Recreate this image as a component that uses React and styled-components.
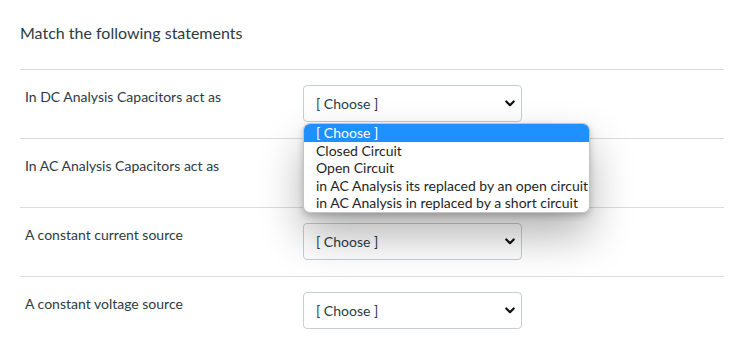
import React from 'react';
import styled, { createGlobalStyle } from 'styled-components';

const GlobalStyle = createGlobalStyle`
    body {
        margin: 0;
        background: #ffffff;
        font-family: Lato, 'Open Sans', sans-serif;
        color: #2d3b45;
    }
`;

const Page = styled.div`
    width: 704px;
    padding: 23px 0 0 20px;
`;

const Title = styled.div`
    font-size: 16px;
    line-height: 20px;
    margin-bottom: 26px;
`;

const Row = styled.div`
    display: flex;
    align-items: flex-start;
    border-top: 1px solid #dcdcdc;
    padding: 15px 0 16px;
`;

const Label = styled.div`
    width: 278px;
    padding: 3px 0 0 5px;
    font-size: 14px;
    line-height: 18px;
`;

const SelectWrap = styled.div`
    position: relative;
`;

// the select under the open popup is hidden behind it
const Select = styled.div`
    box-sizing: border-box;
    width: 219px;
    height: 37px;
    display: flex;
    align-items: center;
    justify-content: space-between;
    padding: 0 6px 0 12px;
    border: 1px solid #c7cdd1;
    border-radius: 4px;
    background: #ffffff;
    font-size: 14px;
    color: #2d3b45;
    visibility: ${props => (props.$covered ? 'hidden' : 'visible')};
`;

const Popup = styled.ul`
    position: absolute;
    top: 38px;
    left: 0;
    z-index: 2;
    box-sizing: border-box;
    width: 287px;
    margin: 0;
    padding: 0;
    list-style: none;
    background: #ffffff;
    border: 1px solid #c4c4c4;
    border-radius: 7px;
    overflow: hidden;
    box-shadow: 0 3px 6px rgba(0, 0, 0, 0.2), 0 22px 44px rgba(0, 0, 0, 0.3);
`;

const Option = styled.li`
    height: 17.6px;
    line-height: 17.6px;
    padding-left: 12px;
    font-size: 14px;
    white-space: nowrap;
    color: ${props => (props.selected ? '#ffffff' : '#1f1f1f')};
    background: ${props => (props.selected ? '#1e90ff' : 'transparent')};
`;

const Chevron = () => (
    <svg width="10" height="7" viewBox="0 0 10 7">
        <path
            d="M1.3 1.5 L5 5.2 L8.7 1.5"
            fill="none"
            stroke="#111"
            strokeWidth="2.2"
            strokeLinecap="round"
            strokeLinejoin="round"
        />
    </svg>
);

const options = [
    '[ Choose ]',
    'Closed Circuit',
    'Open Circuit',
    'in AC Analysis its replaced by an open circuit',
    'in AC Analysis in replaced by a short circuit',
];

const statements = [
    'In DC Analysis Capacitors act as',
    'In AC Analysis Capacitors act as',
    'A constant current source',
    'A constant voltage source',
];

export default function App() {
    return (
        <Page>
            <GlobalStyle />
            <Title>Match the following statements</Title>
            {statements.map((s, i) => (
                <Row key={s}>
                    <Label>{s}</Label>
                    <SelectWrap>
                        <Select $covered={i === 1}>
                            <span>[ Choose ]</span>
                            <Chevron />
                        </Select>
                        {i === 0 && (
                            <Popup>
                                {options.map((o, j) => (
                                    <Option key={o} selected={j === 0}>
                                        {o}
                                    </Option>
                                ))}
                            </Popup>
                        )}
                    </SelectWrap>
                </Row>
            ))}
        </Page>
    );
}
